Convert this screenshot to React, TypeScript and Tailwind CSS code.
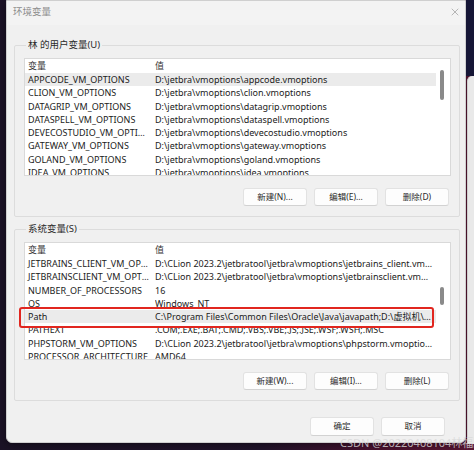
import { X } from "lucide-react";

type Row = { name: string; value: string; selected?: boolean };

const userVars: Row[] = [
  { name: "APPCODE_VM_OPTIONS", value: "D:\\jetbra\\vmoptions\\appcode.vmoptions", selected: true },
  { name: "CLION_VM_OPTIONS", value: "D:\\jetbra\\vmoptions\\clion.vmoptions" },
  { name: "DATAGRIP_VM_OPTIONS", value: "D:\\jetbra\\vmoptions\\datagrip.vmoptions" },
  { name: "DATASPELL_VM_OPTIONS", value: "D:\\jetbra\\vmoptions\\dataspell.vmoptions" },
  { name: "DEVECOSTUDIO_VM_OPTIONS", value: "D:\\jetbra\\vmoptions\\devecostudio.vmoptions" },
  { name: "GATEWAY_VM_OPTIONS", value: "D:\\jetbra\\vmoptions\\gateway.vmoptions" },
  { name: "GOLAND_VM_OPTIONS", value: "D:\\jetbra\\vmoptions\\goland.vmoptions" },
  { name: "IDEA_VM_OPTIONS", value: "D:\\jetbra\\vmoptions\\idea.vmoptions" },
];

const systemVars: Row[] = [
  { name: "JETBRAINS_CLIENT_VM_OPTIONS", value: "D:\\CLion 2023.2\\jetbratool\\jetbra\\vmoptions\\jetbrains_client.vmoptions" },
  { name: "JETBRAINSCLIENT_VM_OPTIONS", value: "D:\\CLion 2023.2\\jetbratool\\jetbra\\vmoptions\\jetbrainsclient.vmoptions" },
  { name: "NUMBER_OF_PROCESSORS", value: "16" },
  { name: "OS", value: "Windows_NT" },
  { name: "Path", value: "C:\\Program Files\\Common Files\\Oracle\\Java\\javapath;D:\\虚拟机\\bin;C:\\Windows", selected: true },
  { name: "PATHEXT", value: ".COM;.EXE;.BAT;.CMD;.VBS;.VBE;.JS;.JSE;.WSF;.WSH;.MSC" },
  { name: "PHPSTORM_VM_OPTIONS", value: "D:\\CLion 2023.2\\jetbratool\\jetbra\\vmoptions\\phpstorm.vmoptions" },
  { name: "PROCESSOR_ARCHITECTURE", value: "AMD64" },
];

function Button({ label, tall }: { label: string; tall?: boolean }) {
  return (
    <button
      className={`w-[64px] ${tall ? "h-[19px]" : "h-[18px]"} rounded-[3px] bg-[#fdfdfd] border border-[#e2e2e2] border-b-[#d2d2d2] text-[8.5px] text-[#2a2a2a] flex items-center justify-center`}
    >
      {label}
    </button>
  );
}

function VarList({ rows, thumbTop, thumbHeight, highlight }: { rows: Row[]; thumbTop: string; thumbHeight: string; highlight?: boolean }) {
  return (
    <div className="relative w-[427px] h-[118px]">
      <div className="w-full h-full bg-white border border-[#d9d9d9] flex overflow-hidden">
        <div className="flex-1 flex flex-col overflow-hidden">
          <div className="h-[14px] shrink-0 flex items-center text-[#333]">
            <span className="w-[130px] pl-[3px]">变量</span>
            <span>值</span>
          </div>
          {rows.map((r) => (
            <div
              key={r.name}
              className={`h-[13.3px] shrink-0 flex items-center text-[#1b1b1b] ${r.selected ? "bg-[#ebebeb]" : ""}`}
            >
              <span className="w-[130px] shrink-0 pl-[3px] pr-[5px] truncate">{r.name}</span>
              <span className="w-[278px] shrink-0 truncate">{r.value}</span>
            </div>
          ))}
        </div>
        <div className="w-[14px] shrink-0 relative bg-white">
          <div className={`absolute left-[4px] w-[4px] rounded-[2px] bg-[#8a8a8a] ${thumbTop} ${thumbHeight}`} />
        </div>
      </div>
      {highlight && (
        <div className="absolute left-[-5px] top-[65px] w-[415px] h-[21px] border-2 border-[#e1261f] rounded-[3px]" />
      )}
    </div>
  );
}

function Group({ title, children }: { title: string; children: React.ReactNode }) {
  return (
    <fieldset className="border border-[#dcdcdc] rounded-[2px] pl-[9px] pr-[10px] pt-[7px] pb-[10px] m-0 min-w-0">
      <legend className="ml-[2px] px-[2px] text-[9.5px] text-[#2a2a2a] leading-[12px]">{title}</legend>
      {children}
    </fieldset>
  );
}

export default function App() {
  return (
    <div
      className="relative w-[474px] h-[450px] overflow-hidden bg-[linear-gradient(90deg,#1b1226_0%,#22142c_55%,#4c1230_80%,#5a1634_100%)]"
      style={{ fontFamily: '"Noto Sans", "Noto Sans CJK SC", sans-serif' }}
    >
      {/* window behind, on the right */}
      <div className="absolute left-[466px] top-0 w-[8px] h-[76px] bg-[#161636]" />
      <div className="absolute left-[467px] top-[76px] w-[20px] h-[368px] bg-[#e9e9e9] rounded-tl-[5px] border-l border-[#cfcfcf]" />

      <div className="ml-[6px] w-[460px] h-[443px] bg-[#f0f0f0] rounded-b-[6px] border border-[#cfcfcf] shadow-[0_2px_8px_rgba(0,0,0,0.45)] flex flex-col text-[9px]">
        <div className="h-[24px] shrink-0 flex items-center justify-between pl-[6px] pr-[4px] bg-[#f3f3f3]">
          <span className="text-[9.5px] text-[#8c8c8c] -mt-[2px]">环境变量</span>
          <X size={12} strokeWidth={1} className="text-[#777] -mt-[2px]" />
        </div>

        <div className="flex flex-col pl-[7px] pr-[5px] pt-[14px] gap-[6px]">
          <Group title="林 的用户变量(U)">
            <VarList rows={userVars} thumbTop="top-[11px]" thumbHeight="h-[30px]" />
            <div className="flex justify-end gap-[7px] mt-[12px]">
              <Button label="新建(N)..." />
              <Button label="编辑(E)..." />
              <Button label="删除(D)" />
            </div>
          </Group>

          <Group title="系统变量(S)">
            <VarList rows={systemVars} thumbTop="top-[44px]" thumbHeight="h-[18px]" highlight />
            <div className="flex justify-end gap-[7px] mt-[12px]">
              <Button label="新建(W)..." />
              <Button label="编辑(I)..." />
              <Button label="删除(L)" />
            </div>
          </Group>
        </div>

        <div className="flex justify-end gap-[7px] pr-[20px] mt-[16px]">
          <Button label="确定" tall />
          <Button label="取消" tall />
        </div>
      </div>

      <div className="absolute left-[340px] top-[436px] text-[11px] leading-[13px] text-[#d8d8d8]/80 whitespace-nowrap">
        CSDN @20220408104林福鹏
      </div>
    </div>
  );
}
